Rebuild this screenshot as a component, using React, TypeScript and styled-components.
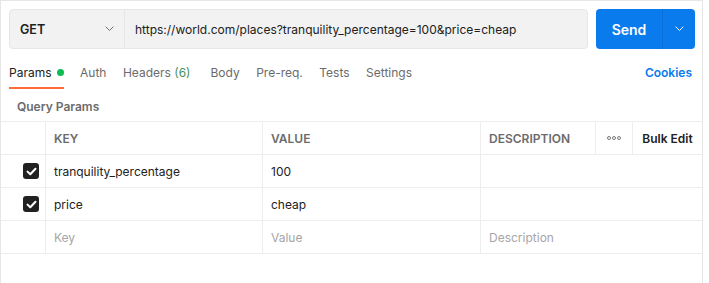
import React from "react";
import styled, { createGlobalStyle } from "styled-components";

const Global = createGlobalStyle`
  html, body { margin: 0; padding: 0; background: #fff; }
  body { font-family: Inter, "Noto Sans", sans-serif; color: #212121; }
  * { box-sizing: border-box; }
`;

const Frame = styled.div`
  width: 703px;
  height: 283px;
  border: 1px solid #e6e6e6;
  border-bottom: none;
  display: flex;
  flex-direction: column;
`;

const TopBar = styled.div`
  display: flex;
  align-items: stretch;
  padding: 8px 7px 8px 8px;
  gap: 8px;
  height: 56px;
`;

const UrlGroup = styled.div`
  flex: 1;
  display: flex;
  background: #f2f2f2;
  border: 1px solid #e6e6e6;
  border-radius: 4px;
`;

const Method = styled.div`
  width: 115px;
  display: flex;
  align-items: center;
  justify-content: space-between;
  padding: 0 10px 0 10px;
  border-right: 1px solid #e6e6e6;
  font-size: 12.5px;
  font-weight: 600;
  color: #212121;
`;

const UrlText = styled.div`
  display: flex;
  align-items: center;
  padding-left: 10px;
  font-size: 12px;
  color: #212121;
`;

const SendGroup = styled.div`
  width: 99px;
  display: flex;
  background: #097bed;
  border-radius: 4px;
  color: #fff;
`;

const SendMain = styled.div`
  width: 67px;
  display: flex;
  align-items: center;
  justify-content: center;
  font-size: 14px;
  font-weight: 600;
  border-right: 1px solid #0a6fd4;
`;

const SendDrop = styled.div`
  flex: 1;
  display: flex;
  align-items: center;
  justify-content: center;
`;

const Tabs = styled.div`
  height: 32px;
  display: flex;
  align-items: stretch;
  padding: 0 10px 0 8px;
`;

const Tab = styled.div<{ $active?: boolean; $gap?: number }>`
  display: flex;
  align-items: center;
  gap: 5px;
  margin-right: ${(p) => p.$gap ?? 16.5}px;
  font-size: 12px;
  color: ${(p) => (p.$active ? "#212121" : "#6b6b6b")};
  border-bottom: 2px solid ${(p) => (p.$active ? "#ff6c37" : "transparent")};
`;

const Dot = styled.span`
  width: 7px;
  height: 7px;
  border-radius: 50%;
  background: #0cbb52;
`;

const Count = styled.span`
  color: #4b8f5f;
`;

const Spacer = styled.div`
  flex: 1;
`;

const Cookies = styled.div`
  display: flex;
  align-items: center;
  padding-bottom: 2px;
  font-size: 12px;
  font-weight: 600;
  color: #097bed;
`;

const Section = styled.div`
  height: 32px;
  display: flex;
  align-items: center;
  padding-left: 16px;
  padding-top: 2px;
  font-size: 12px;
  font-weight: 600;
  color: #6b6b6b;
`;

const Table = styled.div`
  display: grid;
  grid-template-columns: 45px 217px 218px 115px 37px 69px;
  border-top: 1px solid #ededed;
`;

const Cell = styled.div<{ $span?: number; $head?: boolean; $muted?: boolean; $last?: boolean }>`
  height: 33px;
  grid-column: span ${(p) => p.$span ?? 1};
  display: flex;
  align-items: center;
  padding: 0 8px;
  border-bottom: 1px solid #ededed;
  border-right: ${(p) => (p.$last ? "none" : "1px solid #ededed")};
  font-size: 12px;
  font-weight: ${(p) => (p.$head ? 600 : 400)};
  color: ${(p) => (p.$muted ? "#a6a6a6" : p.$head ? "#6b6b6b" : "#212121")};
`;

const CheckCell = styled(Cell)`
  padding: 0 0 0 22px;
`;

const HeadAction = styled(Cell)<{ $dark?: boolean }>`
  justify-content: center;
  padding: 0;
  color: ${(p) => (p.$dark ? "#212121" : "#6b6b6b")};
`;

const Box = styled.span`
  width: 16px;
  height: 16px;
  border-radius: 3px;
  background: #212121;
  display: flex;
  align-items: center;
  justify-content: center;
`;

const Chevron = ({ color, size = 9 }: { color: string; size?: number }) => (
  <svg width={size} height={size * 0.6} viewBox="0 0 10 6" fill="none">
    <path d="M1 1l4 4 4-4" stroke={color} strokeWidth="1.1" strokeLinecap="round" strokeLinejoin="round" />
  </svg>
);

const Check = () => (
  <Box>
    <svg width="11" height="9" viewBox="0 0 11 9" fill="none">
      <path d="M1.5 4.6l2.8 2.7L9.5 1.8" stroke="#fff" strokeWidth="2" strokeLinecap="round" strokeLinejoin="round" />
    </svg>
  </Box>
);

const Dots = () => (
  <svg width="14" height="4" viewBox="0 0 14 4" fill="none">
    <circle cx="2" cy="2" r="1.5" stroke="#6b6b6b" strokeWidth="0.9" />
    <circle cx="7" cy="2" r="1.5" stroke="#6b6b6b" strokeWidth="0.9" />
    <circle cx="12" cy="2" r="1.5" stroke="#6b6b6b" strokeWidth="0.9" />
  </svg>
);

const rows = [
  { key: "tranquility_percentage", value: "100" },
  { key: "price", value: "cheap" },
];

export default function App() {
  return (
    <>
      <Global />
      <Frame>
        <TopBar>
          <UrlGroup>
            <Method>
              GET
              <Chevron color="#6b6b6b" />
            </Method>
            <UrlText>https://world.com/places?tranquility_percentage=100&amp;price=cheap</UrlText>
          </UrlGroup>
          <SendGroup>
            <SendMain>Send</SendMain>
            <SendDrop>
              <Chevron color="#ffffff" />
            </SendDrop>
          </SendGroup>
        </TopBar>
        <Tabs>
          <Tab $active>
            Params
            <Dot />
          </Tab>
          <Tab>Auth</Tab>
          <Tab $gap={20}>
            <span>
              Headers <Count>(6)</Count>
            </span>
          </Tab>
          <Tab>Body</Tab>
          <Tab>Pre-req.</Tab>
          <Tab>Tests</Tab>
          <Tab>Settings</Tab>
          <Spacer />
          <Cookies>Cookies</Cookies>
        </Tabs>
        <Section>Query Params</Section>
        <Table>
          <Cell $head />
          <Cell $head>KEY</Cell>
          <Cell $head>VALUE</Cell>
          <Cell $head>DESCRIPTION</Cell>
          <HeadAction $head>
            <Dots />
          </HeadAction>
          <HeadAction $head $dark $last>
            Bulk Edit
          </HeadAction>
          {rows.map((r) => (
            <React.Fragment key={r.key}>
              <CheckCell>
                <Check />
              </CheckCell>
              <Cell>{r.key}</Cell>
              <Cell>{r.value}</Cell>
              <Cell $span={3} $last />
            </React.Fragment>
          ))}
          <Cell />
          <Cell $muted>Key</Cell>
          <Cell $muted>Value</Cell>
          <Cell $muted $span={3} $last>
            Description
          </Cell>
        </Table>
      </Frame>
    </>
  );
}
